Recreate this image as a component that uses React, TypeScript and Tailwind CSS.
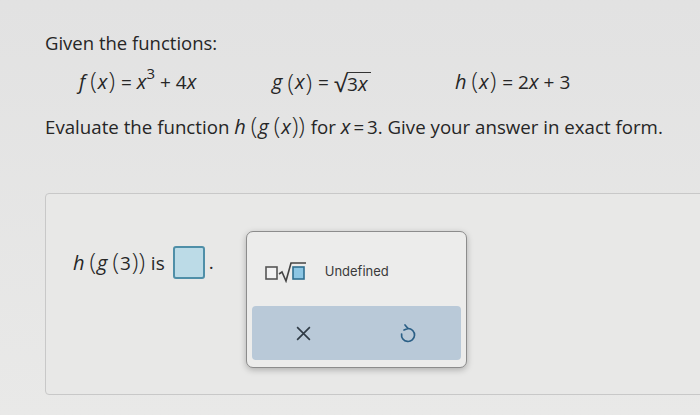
import React from 'react';

const I = ({ children }: { children: React.ReactNode }) => <span className="italic text-[20px]">{children}</span>;
const Op = ({ children }: { children: React.ReactNode }) => <span className="mx-[3px]">{children}</span>;
const Op5 = ({ children }: { children: React.ReactNode }) => <span className="mx-[5px]">{children}</span>;
const P = ({ children }: { children: React.ReactNode }) => (
  <span className="text-[24px] font-light leading-[20px] mx-[1px]">{children}</span>
);
const Gap = () => <span className="ml-[4px]" />;

const SqrtIcon = () => (
  <svg width="42" height="22" viewBox="0 0 42 22" fill="none">
    <rect x="1" y="6" width="11" height="12" stroke="#555" strokeWidth="1.6" fill="#f2f2f2" />
    <path d="M14 13 L17 11 L21 20 L26 2 L41 2" stroke="#444" strokeWidth="1.6" fill="none" />
    <rect x="28" y="6" width="11" height="12" stroke="#2f6f90" strokeWidth="1.6" fill="#8cc6e4" />
  </svg>
);

const UndoIcon = () => (
  <svg width="18" height="22" viewBox="0 0 18 22" fill="none">
    <path d="M9 6.5 A6.5 6.5 0 1 1 2.6 12" stroke="#2b5f86" strokeWidth="1.7" fill="none" strokeLinecap="round" />
    <path d="M6 3 L9 6.5 L5 8" stroke="#2b5f86" strokeWidth="1.7" fill="none" strokeLinecap="round" strokeLinejoin="round" />
  </svg>
);

export default function App() {
  return (
    <div
      className="w-[700px] h-[415px] overflow-hidden bg-gradient-to-b from-[#e2e2e2] to-[#e9e9e8] text-[#262626] pt-[29px] pl-[45px]"
      style={{ fontFamily: '"Open Sans", "Noto Sans", sans-serif' }}
    >
      <p className="text-[18.5px] leading-[28px]">Given the functions:</p>

      <div className="flex items-center text-[19px] leading-[28px] mt-[11px] pl-[34px]">
        <div className="w-[193px]">
          <I>f</I>
          <Gap />
          <P>(</P>
          <I>x</I>
          <P>)</P>
          <Op5>=</Op5>
          <I>x</I>
          <sup className="text-[15px] -top-[0.7em]">3</sup>
          <Op5>+</Op5>4<I>x</I>
        </div>
        <div className="w-[183px] flex items-center">
          <I>g</I>
          <Gap />
          <P>(</P>
          <I>x</I>
          <P>)</P>
          <Op5>=</Op5>
          <span className="inline-flex items-end">
            <span className="text-[24px] leading-[24px]">√</span>
            <span className="border-t border-[#333] leading-[22px] pr-[3px] mt-[2px]">
              3<I>x</I>
            </span>
          </span>
        </div>
        <div>
          <I>h</I>
          <Gap />
          <P>(</P>
          <I>x</I>
          <P>)</P>
          <Op5>=</Op5>2<I>x</I>
          <Op5>+</Op5>3
        </div>
      </div>

      <p className="text-[18.7px] leading-[28px] mt-[17px]">
        Evaluate the function <I>h</I>
        <Gap />
        <P>(</P>
        <I>g</I>
        <Gap />
        <P>(</P>
        <I>x</I>
        <P>))</P> for <I>x</I>
        <Op>=</Op>3. Give your answer in exact form.
      </p>

      <div className="mt-[52px] w-[700px] h-[202px] border border-[#c8c8c8] rounded-l-[4px] bg-[#e8e8e7] flex items-start pl-[27px] pt-[37px]">
        <div className="flex items-center mt-[15px] text-[19px]">
          <span>
            <I>h</I>
            <Gap />
            <P>(</P>
            <I>g</I>
            <Gap />
            <P>(</P>3<P>))</P> is
          </span>
          <span className="ml-[8px] w-[32px] h-[33px] rounded-[3px] border-2 border-[#4f8fa8] bg-[#bcdbe7]" />
          <span className="ml-[4px]">.</span>
        </div>

        <div className="ml-[32px] w-[221px] h-[137px] rounded-[7px] border border-[#8c8c8c] bg-[#ececeb] shadow-[0_2px_6px_rgba(0,0,0,0.25)] px-[5px] pt-[25px]">
          <div className="flex items-center pl-[13px] h-[30px]">
            <SqrtIcon />
            <span className="ml-[18px] text-[13px] text-[#3a3a3a]" style={{ fontFamily: '"Inter", sans-serif' }}>
              Undefined
            </span>
          </div>
          <div className="mt-[19px] h-[54px] rounded-[4px] bg-[#b9c9d8] flex items-center">
            <div className="w-[104px] flex justify-center">
              <svg width="17" height="17" viewBox="0 0 16 16">
                <path d="M2 2 L14 14 M14 2 L2 14" stroke="#2f3a44" strokeWidth="1.5" />
              </svg>
            </div>
            <div className="w-[104px] flex justify-center">
              <UndoIcon />
            </div>
          </div>
        </div>
      </div>
    </div>
  );
}
